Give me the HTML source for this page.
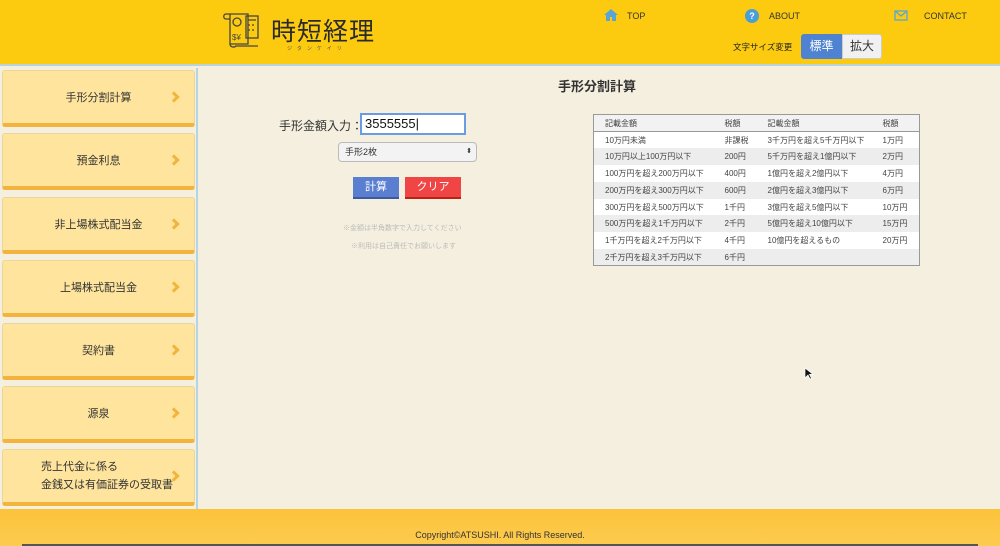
<!DOCTYPE html>
<html><head><meta charset="utf-8"><style>
*{margin:0;padding:0;box-sizing:border-box}
body{width:1000px;height:546px;overflow:hidden;background:#f4efde;font-family:"Liberation Sans","Noto Sans CJK JP",sans-serif;position:relative;color:#333}
.hdr{position:absolute;left:0;top:0;width:1000px;height:66px;background:#fccb0f;border-bottom:2px solid #b9d3dc}
.side{position:absolute;left:0;top:68px;width:198px;height:441px;border-right:2px solid #b5d4e4}
.item{position:absolute;left:2px;width:193px;height:57px;background:#fee49c;border:1px solid #e9d79a;border-bottom:4px solid #f3b33d;border-radius:3px;font-size:11px;color:#333}
.item span{position:absolute;width:100%;text-align:center;top:50%;transform:translateY(-50%);left:0}
.item i{position:absolute;right:16px;top:50%;width:8px;height:8px;border-top:3px solid #f3b33d;border-right:3px solid #f3b33d;transform:translateY(-50%) rotate(45deg);}
.foot{position:absolute;left:0;top:509px;width:1000px;height:37px;background:linear-gradient(#fcc33a,#fdcb50)}
table{position:absolute;left:593px;top:114px;width:327px;border-collapse:collapse;border:1px solid #999;font-size:8px;color:#444}
td{height:16.8px;padding-left:11px}
tr:nth-child(odd){background:#ededed}
tr:nth-child(even){background:#fff}
tr:first-child{background:#f2f2f2}
tr:first-child td{border-bottom:1px solid #999;height:17px}
</style></head><body>
<div class="hdr">
 <svg style="position:absolute;left:222px;top:10px" width="44" height="40" viewBox="0 0 44 40" fill="none" stroke="#444" stroke-width="1.3"><path d="M4 4h22v30H8"/><path d="M4 4c-3 0-3 5 0 5h4"/><path d="M8 4v30c0 3 4 4 6 2h22"/><circle cx="15" cy="12" r="4"/><rect x="24" y="6" width="12" height="22"/><path d="M26 10h8M26 15h2M30 15h2M26 20h2M30 20h2"/><text x="10" y="30" font-size="8" fill="#444" stroke="none">$¥</text></svg>
 <div style="position:absolute;left:271px;top:12px;font-size:25px;color:#2a2a2a;letter-spacing:1px;font-family:'Noto Sans CJK JP',sans-serif">時短経理</div>
 <div style="position:absolute;left:287px;top:45px;font-size:5px;letter-spacing:5px;color:#555">ジタンケイリ</div>
 <svg style="position:absolute;left:603px;top:8px" width="16" height="14" viewBox="0 0 16 14"><path d="M8 1L1 7h2v6h4V9h2v4h4V7h2z" fill="#5aa5d6"/></svg>
 <div style="position:absolute;left:627px;top:11px;font-size:9px;color:#333">TOP</div>
 <div style="position:absolute;left:745px;top:9px;width:14px;height:14px;border-radius:50%;background:#4a9fd8;color:#fff;font-size:9px;text-align:center;line-height:14px;font-weight:bold">?</div>
 <div style="position:absolute;left:769px;top:11px;font-size:9px;color:#333">ABOUT</div>
 <svg style="position:absolute;left:894px;top:10px" width="14" height="11" viewBox="0 0 14 11" fill="none" stroke="#5aa5d6" stroke-width="1.3"><rect x="1" y="1" width="12" height="9"/><path d="M1 1l6 5 6-5"/></svg>
 <div style="position:absolute;left:924px;top:11px;font-size:9px;color:#333">CONTACT</div>
 <div style="position:absolute;left:733px;top:41px;font-size:8.5px;color:#222">文字サイズ変更</div>
 <div style="position:absolute;left:801px;top:34px;width:41px;height:25px;background:#4f83d1;border-radius:3px 0 0 3px;color:#fff;font-size:12px;text-align:center;line-height:25px">標準</div>
 <div style="position:absolute;left:842px;top:34px;width:40px;height:25px;background:#f1f1f1;border:1px solid #ccc;border-radius:0 3px 3px 0;color:#333;font-size:12px;text-align:center;line-height:23px">拡大</div>
</div>
<div class="side">
 <div class="item" style="top:2px"><span>手形分割計算</span><i></i></div>
 <div class="item" style="top:65px"><span>預金利息</span><i></i></div>
 <div class="item" style="top:129px"><span>非上場株式配当金</span><i></i></div>
 <div class="item" style="top:192px"><span>上場株式配当金</span><i></i></div>
 <div class="item" style="top:255px"><span>契約書</span><i></i></div>
 <div class="item" style="top:318px"><span>源泉</span><i></i></div>
 <div class="item" style="top:381px"><span style="text-align:left;left:38px;line-height:18px">売上代金に係る<br>金銭又は有価証券の受取書</span><i></i></div>
</div>
<div style="position:absolute;left:558px;top:76px;font-size:13px;font-weight:bold;color:#333">手形分割計算</div>
<div style="position:absolute;left:279px;top:117px;font-size:12px;color:#333">手形金額入力：</div>
<div style="position:absolute;left:360px;top:113px;width:106px;height:22px;background:#fff;border:2px solid #6b9be0;font-size:13px;padding-left:3px;line-height:18px;color:#111">3555555|</div>
<div style="position:absolute;left:338px;top:142px;width:139px;height:20px;background:#f3f3f3;border:1px solid #bbb;border-radius:4px;font-size:9px;padding-left:6px;line-height:18px">手形2枚<span style="position:absolute;right:4px;font-size:7px">⬍</span></div>
<div style="position:absolute;left:353px;top:177px;width:46px;height:22px;background:#5b7fd0;border-bottom:2px solid #3d5a9c;color:#fff;font-size:11px;text-align:center;line-height:20px">計算</div>
<div style="position:absolute;left:405px;top:177px;width:56px;height:22px;background:#ef4545;border-bottom:2px solid #b21;color:#fff;font-size:11px;text-align:center;line-height:20px">クリア</div>
<div style="position:absolute;left:343px;top:223px;font-size:7px;color:#bbb">※金額は半角数字で入力してください</div>
<div style="position:absolute;left:351px;top:241px;font-size:7px;color:#bbb">※利用は自己責任でお願いします</div>
<table>
<tr><td style="width:120px">記載金額</td><td style="width:43px">税額</td><td style="width:115px">記載金額</td><td>税額</td></tr>
<tr><td>10万円未満</td><td>非課税</td><td>3千万円を超え5千万円以下</td><td>1万円</td></tr>
<tr><td>10万円以上100万円以下</td><td>200円</td><td>5千万円を超え1億円以下</td><td>2万円</td></tr>
<tr><td>100万円を超え200万円以下</td><td>400円</td><td>1億円を超え2億円以下</td><td>4万円</td></tr>
<tr><td>200万円を超え300万円以下</td><td>600円</td><td>2億円を超え3億円以下</td><td>6万円</td></tr>
<tr><td>300万円を超え500万円以下</td><td>1千円</td><td>3億円を超え5億円以下</td><td>10万円</td></tr>
<tr><td>500万円を超え1千万円以下</td><td>2千円</td><td>5億円を超え10億円以下</td><td>15万円</td></tr>
<tr><td>1千万円を超え2千万円以下</td><td>4千円</td><td>10億円を超えるもの</td><td>20万円</td></tr>
<tr><td>2千万円を超え3千万円以下</td><td>6千円</td><td></td><td></td></tr>
</table>
<svg style="position:absolute;left:804px;top:367px" width="9" height="13" viewBox="0 0 9 13"><path d="M1 1v10l3-3 2 4 1.5-.7-2-4H9z" fill="#111" stroke="#fff" stroke-width=".7"/></svg>
<div class="foot">
 <div style="position:absolute;left:0;width:1000px;top:21px;text-align:center;font-size:9px;color:#333">Copyright©ATSUSHI. All Rights Reserved.</div>
 <div style="position:absolute;left:22px;top:35px;width:956px;height:2px;background:#555"></div>
</div>
</body></html>
